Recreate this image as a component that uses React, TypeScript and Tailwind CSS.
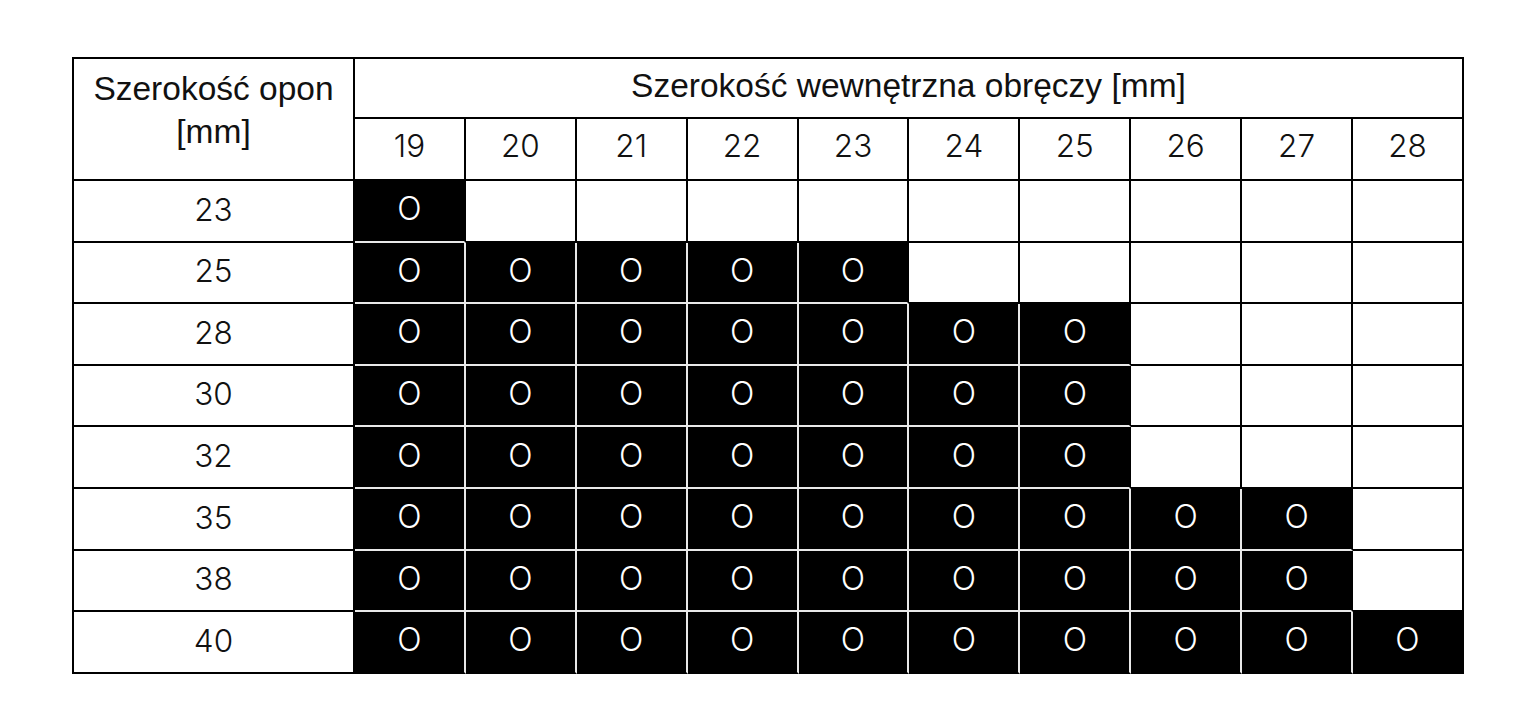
import React from "react";

const rimWidths = [19, 20, 21, 22, 23, 24, 25, 26, 27, 28];

// tyre width -> how many rim widths (from the left) fit
const tyreRows = [
  { tyre: 23, fits: 1 },
  { tyre: 25, fits: 5 },
  { tyre: 28, fits: 7 },
  { tyre: 30, fits: 7 },
  { tyre: 32, fits: 7 },
  { tyre: 35, fits: 9 },
  { tyre: 38, fits: 9 },
  { tyre: 40, fits: 10 },
];

const font = { fontFamily: '"Liberation Sans", Arial, sans-serif' };
const light = { fontFamily: 'Inter, "Liberation Sans", sans-serif' };

export default function App() {
  return (
    <div className="min-h-screen bg-white pl-[72px] pt-[57px]" style={font}>
      <div className="grid w-max grid-cols-[281px_repeat(10,110.9px)] grid-rows-[60px_62px_repeat(8,61.6px)] border-t-2 border-l-2 border-black text-[#111]">
        {/* Header */}
        <div className="row-span-2 border-r-2 border-b-2 border-black pt-[8px] text-center text-[33.5px] leading-[43px]">
          Szerokość opon
          <br />
          [mm]
        </div>
        <div className="col-span-10 flex items-center justify-center border-r-2 border-b-2 border-black pb-[4px] text-[33.5px]">
          Szerokość wewnętrzna obręczy [mm]
        </div>
        {rimWidths.map((w) => (
          <div
            key={w}
            style={light}
            className="flex items-center justify-center border-r-2 border-b-2 border-black pb-[6px] text-[31.5px] font-light"
          >
            {w}
          </div>
        ))}

        {/* Body */}
        {tyreRows.map((row, r) => (
          <React.Fragment key={row.tyre}>
            <div
              style={light}
              className="flex items-center justify-center border-r-2 border-b-2 border-black pb-[3px] text-[31.5px] font-light"
            >
              {row.tyre}
            </div>
            {rimWidths.map((w, i) => {
              const fits = i < row.fits;
              if (!fits) {
                return <div key={w} className="border-r-2 border-b-2 border-black bg-white" />;
              }
              const rightBlack = i + 1 < row.fits;
              const belowBlack = r < tyreRows.length - 1;
              return (
                <div
                  key={w}
                  style={light}
                  className={`flex items-center justify-center border-r-2 border-b-2 bg-black pb-[3px] text-[32px] font-light text-white ${
                    rightBlack ? "border-r-[#e9e9e9]" : "border-r-black"
                  } ${belowBlack ? "border-b-[#e9e9e9]" : "border-b-black"}`}
                >
                  O
                </div>
              );
            })}
          </React.Fragment>
        ))}
      </div>
    </div>
  );
}
